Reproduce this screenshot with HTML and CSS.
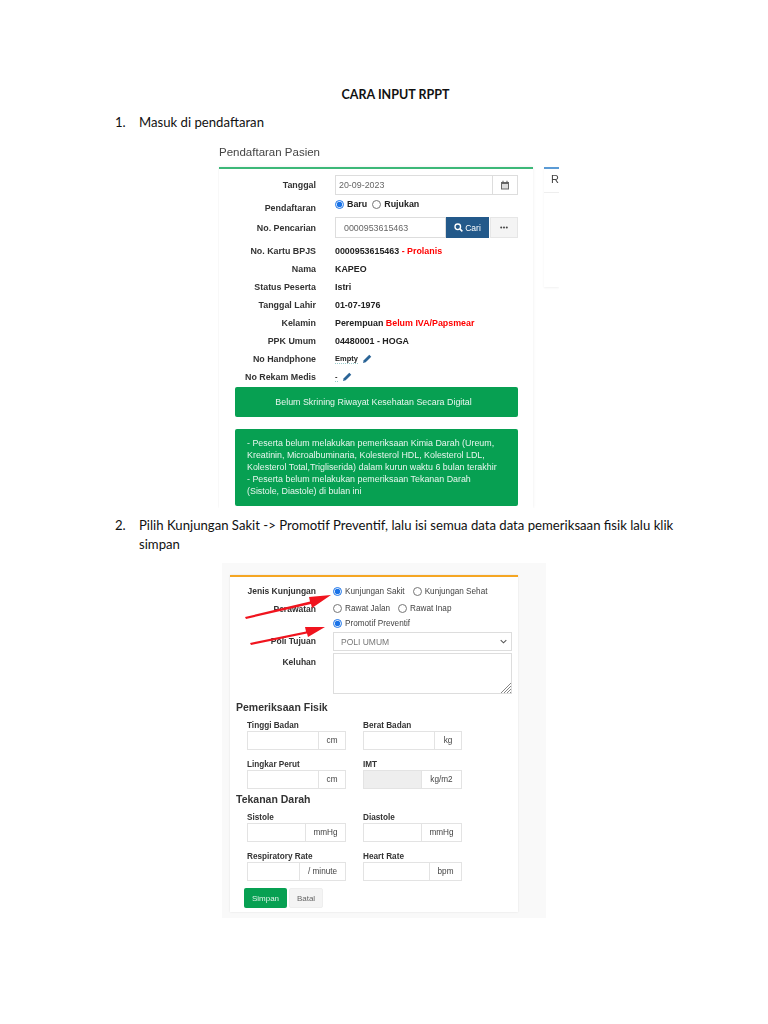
FILE: index.html
```html
<!DOCTYPE html>
<html lang="en">
<head>
    <meta charset="UTF-8">
    <meta name="viewport" content="width=device-width, initial-scale=1.0">
    <title>Cara Input RPPT</title>
    <link rel="stylesheet" href="styles.css">
</head>
<body>
<div class="page">
    <h1 class="doc-title">CARA INPUT RPPT</h1>

    <div class="step"><span class="step-no">1.</span><p>Masuk di pendaftaran</p></div>

    <!-- first screenshot: pendaftaran -->
    <div class="shot shot-one">
        <div class="shot-head">Pendaftaran Pasien</div>
        <div class="shot-panels">
            <div class="panel panel-green">
                <div class="row row-input">
                    <label>Tanggal</label>
                    <div class="group group-date">
                        <input type="text" value="20-09-2023">
                        <span class="addon">
                            <svg width="10" height="10" viewBox="0 0 10 10"><path d="M1 2h8v7.5H1z" fill="#666"/><path d="M2 4h6v4.5H2z" fill="#ddd"/><path d="M2.5 .8h1v2h-1zM6.5 .8h1v2h-1z" fill="#555"/></svg>
                        </span>
                    </div>
                </div>
                <div class="row row-radio">
                    <label>Pendaftaran</label>
                    <div class="radios">
                        <input type="radio" name="daftar" checked><b>Baru</b>
                        <input type="radio" name="daftar"><b>Rujukan</b>
                    </div>
                </div>
                <div class="row row-search">
                    <label>No. Pencarian</label>
                    <div class="group group-search">
                        <input type="text" value="0000953615463">
                        <button type="button" class="btn-cari">
                            <svg width="9" height="9" viewBox="0 0 10 10"><circle cx="4.2" cy="4.2" r="3.1" fill="none" stroke="#fff" stroke-width="1.5"/><path d="M6.5 6.5l2.8 2.8" stroke="#fff" stroke-width="1.7"/></svg>
                            Cari
                        </button>
                        <button type="button" class="btn-more" aria-label="more">
                            <svg width="8" height="3" viewBox="0 0 8 3"><circle cx="1.2" cy="1.5" r="1" fill="#444"/><circle cx="4" cy="1.5" r="1" fill="#444"/><circle cx="6.8" cy="1.5" r="1" fill="#444"/></svg>
                        </button>
                    </div>
                </div>
                <div class="row row-data"><label>No. Kartu BPJS</label><div>0000953615463 <span class="red">- Prolanis</span></div></div>
                <div class="row row-data"><label>Nama</label><div>KAPEO</div></div>
                <div class="row row-data"><label>Status Peserta</label><div>Istri</div></div>
                <div class="row row-data"><label>Tanggal Lahir</label><div>01-07-1976</div></div>
                <div class="row row-data"><label>Kelamin</label><div>Perempuan <span class="red">Belum IVA/Papsmear</span></div></div>
                <div class="row row-data"><label>PPK Umum</label><div>04480001 - HOGA</div></div>
                <div class="row row-data"><label>No Handphone</label>
                    <div class="editable"><span class="empty">Empty</span>
                        <svg class="pencil" width="9" height="9" viewBox="0 0 10 10"><path d="M0 10l.8-3L7 .8l2.2 2.2L3 9.2z" fill="#2a6496"/></svg>
                    </div>
                </div>
                <div class="row row-data"><label>No Rekam Medis</label>
                    <div class="editable"><span class="empty">-</span>
                        <svg class="pencil" width="9" height="9" viewBox="0 0 10 10"><path d="M0 10l.8-3L7 .8l2.2 2.2L3 9.2z" fill="#2a6496"/></svg>
                    </div>
                </div>
                <div class="alert alert-center">Belum Skrining Riwayat Kesehatan Secara Digital</div>
                <div class="alert alert-list">
                    - Peserta belum melakukan pemeriksaan Kimia Darah (Ureum,<br>
                    Kreatinin, Microalbuminaria, Kolesterol HDL, Kolesterol LDL,<br>
                    Kolesterol Total,Trigliserida) dalam kurun waktu 6 bulan terakhir<br>
                    - Peserta belum melakukan pemeriksaan Tekanan Darah<br>
                    (Sistole, Diastole) di bulan ini
                </div>
            </div>
            <div class="panel-side"><div class="side-head">R</div></div>
        </div>
    </div>

    <div class="step step-two">
        <span class="step-no">2.</span>
        <p>Pilih Kunjungan Sakit -&gt; Promotif Preventif, lalu isi semua data data pemeriksaan fisik lalu klik simpan</p>
    </div>

    <!-- second screenshot: kunjungan -->
    <div class="shot shot-two">
        <div class="panel panel-orange">
            <div class="visit visit-jenis">
                <label>Jenis Kunjungan</label>
                <div class="radios">
                    <input type="radio" name="jenis" checked><span>Kunjungan Sakit</span>
                    <input type="radio" name="jenis"><span>Kunjungan Sehat</span>
                </div>
            </div>
            <div class="visit visit-rawat">
                <label>Perawatan</label>
                <div class="radios">
                    <input type="radio" name="rawat"><span>Rawat Jalan</span>
                    <input type="radio" name="rawat"><span>Rawat Inap</span>
                </div>
            </div>
            <div class="visit visit-promotif">
                <label></label>
                <div class="radios">
                    <input type="radio" name="rawat" checked><span>Promotif Preventif</span>
                </div>
            </div>
            <div class="visit visit-poli">
                <label>Poli Tujuan</label>
                <div class="fake-select">POLI UMUM
                    <svg width="7" height="5" viewBox="0 0 8 5"><path d="M.8 .8L4 4l3.2-3.2" fill="none" stroke="#555" stroke-width="1.2"/></svg>
                </div>
            </div>
            <div class="visit visit-keluhan">
                <label>Keluhan</label>
                <div class="fake-area">
                    <svg class="resizer" width="11" height="11" viewBox="0 0 11 11"><path d="M11 1L1 11M11 4L4 11M11 7L7 11M11 10l-1 1" stroke="#666" stroke-width=".8"/></svg>
                </div>
            </div>

            <h3 class="section-title section-fisik">Pemeriksaan Fisik</h3>
            <div class="fields">
                <div class="field"><label>Tinggi Badan</label><div class="group-unit"><input type="text"><span class="unit unit-sm">cm</span></div></div>
                <div class="field"><label>Berat Badan</label><div class="group-unit"><input type="text"><span class="unit unit-sm">kg</span></div></div>
                <div class="field"><label>Lingkar Perut</label><div class="group-unit"><input type="text"><span class="unit unit-sm">cm</span></div></div>
                <div class="field"><label>IMT</label><div class="group-unit"><input type="text" class="is-disabled" disabled><span class="unit unit-md">kg/m2</span></div></div>
            </div>

            <h3 class="section-title section-darah">Tekanan Darah</h3>
            <div class="fields">
                <div class="field"><label>Sistole</label><div class="group-unit"><input type="text"><span class="unit unit-md">mmHg</span></div></div>
                <div class="field"><label>Diastole</label><div class="group-unit"><input type="text"><span class="unit unit-md">mmHg</span></div></div>
                <div class="field"><label>Respiratory Rate</label><div class="group-unit"><input type="text"><span class="unit unit-lg">/ minute</span></div></div>
                <div class="field"><label>Heart Rate</label><div class="group-unit"><input type="text"><span class="unit unit-bpm">bpm</span></div></div>
            </div>

            <div class="actions">
                <button type="button" class="btn-simpan">Simpan</button>
                <button type="button" class="btn-batal">Batal</button>
            </div>
        </div>

        <!-- red arrows drawn over the screenshot -->
        <svg class="arrows" width="324" height="355" viewBox="0 0 324 355">
            <path d="M23 54L88 38.500L87 34L109 32L90 45L89 41L24 56z" fill="#f0141e"/>
            <path d="M28 80L84 68.500L83 64L103 64L86 74L85 70.500L29 82z" fill="#f0141e"/>
        </svg>
    </div>
</div>
</body>
</html>
```

FILE: styles.css
```css
* {
    box-sizing: border-box;
}

body {
    margin: 0;
    background-color: #fff;
    font-family: Lato, "Open Sans", sans-serif;
    color: #111;
}

.page {
    height: 1024px;
    overflow: hidden;
    padding: 87px 92px 0 115px;
}

.doc-title {
    margin: 0;
    font-size: 12.5px;
    line-height: 16px;
    font-weight: 700;
    text-align: center;
}

.step {
    display: flex;
    margin-top: 10px;
    font-size: 13.15px;
    line-height: 19px;
}

.step p {
    margin: 0;
}

.step-no {
    flex: 0 0 24px;
}

.step-two {
    margin-top: 8px;
}

/* screenshots */
.shot {
    font-family: "Liberation Sans", Arial, sans-serif;
    filter: blur(0.4px);
}

.shot-one {
    width: 341px;
    height: 368px;
    margin: 8px 0 0 103px;
    padding-left: 1px;
    overflow: hidden;
}

.shot-head {
    height: 27px;
    padding-top: 5px;
    font-size: 11.5px;
    line-height: 14px;
    color: #444;
}

.shot-panels {
    display: flex;
    gap: 11px;
}

.panel {
    background-color: #fff;
}

.panel-green {
    width: 314px;
    min-width: 0;
    flex: none;
    height: 341px;
    padding: 6px 15px 0 0;
    border-top: 2px solid #3cb878;
    box-shadow: 0 0 3px rgba(0, 0, 0, 0.08);
}

.panel-side {
    flex: 1;
    height: 120px;
    border-top: 2px solid #5b9bd5;
    box-shadow: 0 1px 2px rgba(0, 0, 0, 0.06);
}

.side-head {
    height: 24px;
    padding: 4px 0 0 7px;
    font-size: 11px;
    color: #444;
    border-bottom: 1px solid #eee;
}

.row {
    display: grid;
    grid-template-columns: 97px minmax(0, 1fr);
    column-gap: 19px;
    font-size: 8.9px;
    font-weight: 700;
    color: #222;
}

.row label {
    text-align: right;
    color: #333;
}

.row-input {
    height: 20px;
    align-items: center;
}

.row-radio {
    height: 22px;
}

.row-radio label {
    padding-top: 8px;
}

.row-radio .radios {
    height: 18px;
}

.row-search {
    height: 21px;
    align-items: center;
}

.row-data {
    height: 18px;
    align-items: center;
}

.row-search + .row-data {
    margin-top: 4px;
}

.red {
    color: #f00;
}

.group {
    display: flex;
    height: 100%;
}

.group input {
    flex: 1;
    width: 0;
    min-width: 0;
    height: 100%;
    border: 1px solid #ddd;
    font: 8.9px "Liberation Sans", Arial, sans-serif;
    color: #666;
}

.group-date input {
    padding: 0 3px;
}

.group-search input {
    padding: 0 8px;
}

.addon {
    display: flex;
    flex: 0 0 25px;
    align-items: center;
    justify-content: center;
    border: 1px solid #ddd;
    border-left: 0;
}

.btn-cari,
.btn-more,
.btn-simpan,
.btn-batal {
    padding: 0;
    border: 0;
    font: 8.5px "Liberation Sans", Arial, sans-serif;
}

.btn-cari {
    display: flex;
    flex: 0 0 43px;
    align-items: center;
    justify-content: center;
    gap: 2px;
    background-color: #23598a;
    color: #fff;
}

.btn-more {
    display: flex;
    flex: 0 0 28px;
    align-items: center;
    justify-content: center;
    margin-left: 1px;
    background-color: #f4f4f4;
    border: 1px solid #e6e6e6;
}

.radios {
    display: flex;
    align-items: center;
    font-size: 8.2px;
    color: #444;
}

.row .radios {
    font-size: 8.9px;
    color: #222;
}

.radios input {
    width: 9px;
    height: 9px;
    margin: 0 3px 0 0;
    accent-color: #1a73e8;
}

.radios b + input {
    margin-left: 5px;
}

.radios span + input {
    margin-left: 8px;
}

.editable {
    display: flex;
    align-items: flex-start;
    gap: 5px;
}

.empty {
    font-size: 7.5px;
    border-bottom: 1px dotted #9cc;
}

.alert {
    margin-left: 16px;
    background-color: #07a052;
    color: #e8f6ee;
    border-radius: 2px;
    font-size: 8.9px;
}

.alert-center {
    height: 30px;
    margin-top: 1px;
    padding-right: 6px;
    line-height: 30px;
    text-align: center;
}

.alert-list {
    height: 77px;
    margin-top: 12px;
    padding: 8px 12px;
    line-height: 12px;
}

/* second screenshot */
.shot-two {
    position: relative;
    width: 324px;
    height: 355px;
    margin: 9px 0 0 107px;
    padding: 12px 0 0 8px;
    background-color: #f9f9f9;
}

.panel-orange {
    width: 288px;
    height: 337px;
    padding: 5px 6px 0 0;
    border-top: 2px solid #f5a623;
    box-shadow: 0 0 2px rgba(0, 0, 0, 0.1);
}

.visit {
    display: grid;
    grid-template-columns: 86px minmax(0, 1fr);
    column-gap: 17px;
    font-size: 8.5px;
    color: #555;
}

.visit label {
    text-align: right;
    font-weight: 700;
    color: #333;
}

.visit-jenis {
    height: 18px;
    align-items: center;
}

.visit-rawat {
    height: 17px;
    align-items: center;
}

.visit-promotif {
    height: 13px;
    align-items: center;
}

.visit-poli {
    height: 19px;
    margin-top: 2px;
    align-items: center;
}

.visit-poli label {
    padding-bottom: 2px;
}

.visit-keluhan {
    height: 41px;
    margin-top: 2px;
}

.visit-keluhan label {
    padding-top: 4px;
}

.fake-select {
    display: flex;
    align-items: center;
    justify-content: space-between;
    height: 100%;
    padding: 0 4px 0 7px;
    border: 1px solid #ddd;
    color: #777;
}

.fake-area {
    position: relative;
    height: 100%;
    border: 1px solid #ddd;
}

.resizer {
    position: absolute;
    right: 0;
    bottom: 0;
}

.section-title {
    height: 16px;
    margin: 0 0 0 6px;
    font-size: 10.5px;
    line-height: 16px;
    color: #333;
}

.section-fisik {
    margin-top: 5px;
}

.section-darah {
    margin-top: 2px;
}

.fields {
    display: grid;
    grid-template-columns: 99px 99px;
    column-gap: 17px;
    row-gap: 8px;
    margin: 4px 0 0 17px;
}

.field label {
    display: block;
    height: 12px;
    padding-top: 1px;
    font-size: 8.2px;
    line-height: 12px;
    font-weight: 700;
    color: #333;
}

.group-unit {
    display: flex;
    height: 19px;
}

.group-unit input {
    flex: 1;
    width: 0;
    min-width: 0;
    border: 1px solid #e3e3e3;
    background-color: #fff;
}

.group-unit .is-disabled {
    background-color: #eee;
}

.unit {
    display: flex;
    align-items: center;
    justify-content: center;
    border: 1px solid #e3e3e3;
    border-left: 0;
    font-size: 8.2px;
    color: #444;
}

.unit-sm {
    flex: 0 0 27px;
}

.unit-md {
    flex: 0 0 40px;
}

.unit-lg {
    flex: 0 0 46px;
}

.unit-bpm {
    flex: 0 0 32px;
}

.actions {
    display: flex;
    gap: 2px;
    height: 20px;
    margin: 7px 0 0 14px;
}

.btn-simpan {
    width: 43px;
    background-color: #07a052;
    color: #dff3e8;
    border-radius: 2px;
    font-size: 8px;
}

.btn-batal {
    width: 34px;
    background-color: #f4f4f4;
    border: 1px solid #eee;
    color: #666;
    border-radius: 2px;
    font-size: 8px;
}

.arrows {
    position: absolute;
    top: 0;
    left: 0;
}
```
